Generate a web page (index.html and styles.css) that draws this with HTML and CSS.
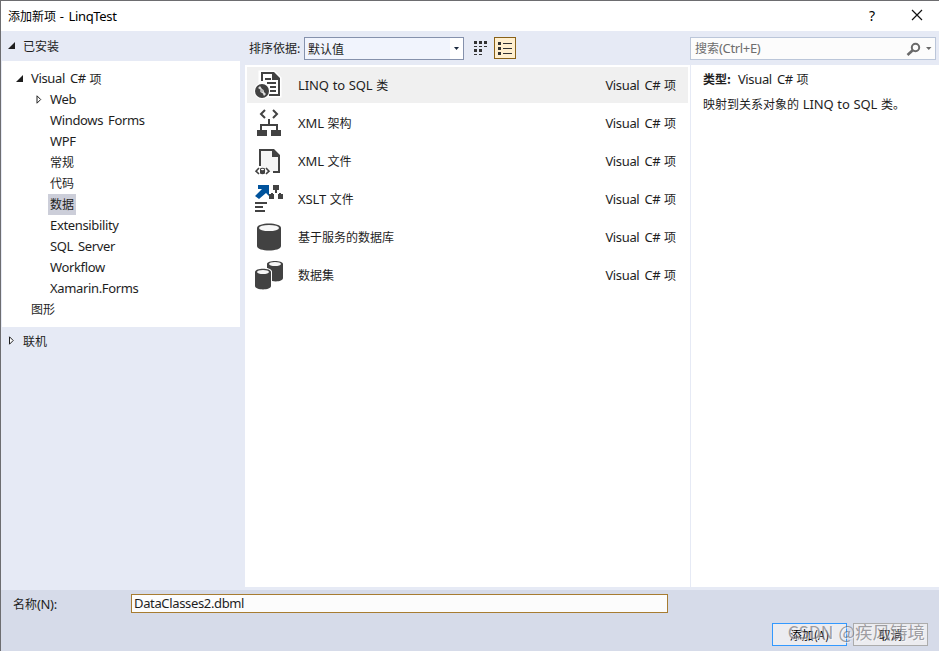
FILE: index.html
```html
<!DOCTYPE html>
<html lang="zh-CN">
<head>
<meta charset="utf-8">
<title>添加新项 - LinqTest</title>
<link rel="stylesheet" href="styles.css">
</head>
<body>
<div class="window">
  <header class="titlebar">
    <span class="title">添加新项 <b class="en">- LinqTest</b></span>
    <span class="help">?</span>
    <svg class="close" width="12" height="12" viewBox="0 0 12 12"><path d="M1 1l10 10M11 1L1 11" stroke="#111" stroke-width="1.2"/></svg>
  </header>
  <main class="content">
    <aside class="sidebar">
      <div class="group"><svg class="arrow" width="8" height="8"><path d="M7 0v7H0z" fill="#1e1e1e"/></svg>已安装</div>
      <ul class="tree">
        <li class="root"><svg class="arrow" width="8" height="8"><path d="M7 0v7H0z" fill="#1e1e1e"/></svg><b class="en">Visual C#</b> 项</li>
        <li class="branch"><svg class="arrow" width="6" height="9"><path d="M1 .8v7.4L4.7 4.5z" fill="#fff" stroke="#1e1e1e"/></svg><b class="en">Web</b></li>
        <li><b class="en">Windows Forms</b></li>
        <li><b class="en">WPF</b></li>
        <li class="cjk">常规</li>
        <li class="cjk">代码</li>
        <li><span class="selected">数据</span></li>
        <li><b class="en">Extensibility</b></li>
        <li><b class="en">SQL Server</b></li>
        <li><b class="en">Workflow</b></li>
        <li><b class="en">Xamarin.Forms</b></li>
        <li class="top cjk">图形</li>
      </ul>
      <div class="group online"><svg class="arrow" width="8" height="9"><path d="M1.5 .8v7.4L5.2 4.5z" fill="#fff" stroke="#1e1e1e"/></svg>联机</div>
    </aside>
    <section class="center">
      <div class="toolbar">
        <label>排序依据:</label>
        <div class="select"><span>默认值</span><i class="drop"><svg width="5" height="3"><path d="M0 0h5L2.5 3z" fill="#1b293e"/></svg></i></div>
        <svg class="grid-icon" width="14" height="14" fill="#333"><path d="M0 0h3v3H0zM5 0h3v3H5zM10 0h3v3h-3zM0 5h3v1H0zM5 5h3v1H5zM10 5h3v1h-3zM0 8h3v3H0zM5 8h3v3H5zM0 13h3v1H0zM5 13h3v1H5z"/></svg>
        <span class="list-button"><svg width="15" height="13" fill="#333"><path d="M0 0h3v3H0zM0 5h3v3H0zM0 10h3v3H0zM5 1h9v1H5zM5 6h9v1H5zM5 11h9v1H5z"/></svg></span>
      </div>
      <div class="list">
        <div class="item active">
          <svg class="icon" width="32" height="32" fill="#424242"><path d="M7 3h14l6 6v18H12V15H7z" fill="#fff" stroke="#fff" stroke-width="3"/><path d="M8 3h13l6 6v18H16v-2h9V11h-6V5h-9v7H8z"/><path d="M12 9h6v2h-6zM14 13h9v2h-9zM17 17h6v2h-6zM17 21h6v2h-6z"/><circle cx="9" cy="22" r="8" fill="#fff"/><circle cx="9" cy="22" r="7"/><path d="M5 19l2-2 2 3-1 1zM9 23l1-1 3 3-2 2z" fill="#ddd"/><circle cx="9" cy="22" r="1.7" fill="#fff"/><circle cx="9" cy="22" r=".7"/></svg>
          <span class="name"><b class="en wide">LINQ to SQL</b> 类</span><span><b class="en">Visual C#</b> 项</span>
        </div>
        <div class="item">
          <svg class="icon" width="32" height="32" fill="#424242"><path d="M12 3L8 7l4 4M20 3l4 4-4 4" fill="none" stroke="#424242" stroke-width="2"/><path d="M15 12h2v5h8v6h3v6H18v-6h5v-4H9v4h5v6H4v-6h3v-6h8z"/></svg>
          <span class="name"><b class="en wide">XML</b> 架构</span><span><b class="en">Visual C#</b> 项</span>
        </div>
        <div class="item">
          <svg class="icon" width="32" height="32"><path d="M8 5h12l5 5v17H8z" fill="#f5f5f5"/><path d="M6 21V4h15l6 6v18h-7v-2h5V12h-6V6H8v15z" fill="#424242"/><path d="M6 23l-3 3.2L6 29M13 23l3 3.2-3 2.8" fill="none" stroke="#424242" stroke-width="1.6"/><path d="M7 23.5q2.5-1.5 5 0v5q-2.5 1.5-5 0z" fill="#424242"/><ellipse cx="9.5" cy="24.5" rx="1.6" ry=".7" fill="#fff"/></svg>
          <span class="name"><b class="en wide">XML</b> 文件</span><span><b class="en">Visual C#</b> 项</span>
        </div>
        <div class="item">
          <svg class="icon" width="32" height="32" fill="#424242"><path d="M5 2h11v11l-3-3-7 6-4-3 7-7H5z" fill="#00539c"/><path d="M20 2h6v5h-2v3h4v1h2v5h-5v-5h1v-1h-6v1h1v5h-5v-5h2v-1h4V7h-2zM2 19h12v2H2zM2 23h8v2H2zM2 27h10v2H2z"/></svg>
          <span class="name"><b class="en wide">XSLT</b> 文件</span><span><b class="en">Visual C#</b> 项</span>
        </div>
        <div class="item">
          <svg class="icon" width="32" height="32"><path d="M4 7c0-6 24-6 24 0v18c0 6-24 6-24 0z" fill="#424242"/><ellipse cx="16" cy="7" rx="10" ry="3.1" fill="#f7f7f7"/></svg>
          <span class="name">基于服务的数据库</span><span><b class="en">Visual C#</b> 项</span>
        </div>
        <div class="item">
          <svg class="icon" width="32" height="32"><path d="M14 5c0-4 16-4 16 0v14c0 3-6 4-11 3V13l-5-4z" fill="#424242"/><ellipse cx="22" cy="5" rx="6" ry="2" fill="#f7f7f7"/><path d="M1 13c0-6 18-6 18 0v14c0 5-18 5-18 0z" fill="#fff"/><path d="M2 13c0-4.5 16-4.5 16 0v14c0 4.5-16 4.5-16 0z" fill="#424242"/><ellipse cx="10" cy="13" rx="6" ry="2" fill="#f7f7f7"/></svg>
          <span class="name">数据集</span><span><b class="en">Visual C#</b> 项</span>
        </div>
      </div>
    </section>
    <aside class="details">
      <div class="search"><span>搜索<b class="en">(Ctrl+E)</b></span><svg width="28" height="16"><circle cx="10.5" cy="6.5" r="3.7" fill="none" stroke="#6a6a6a" stroke-width="2"/><path d="M8 9l-5.5 5" stroke="#6a6a6a" stroke-width="2.6"/><path d="M21 6h5.500l-2.750 3z" fill="#6a6a6a"/></svg></div>
      <div class="description"><p><strong>类型:</strong><b class="en">Visual C#</b> 项</p><p>映射到关系对象的 <b class="en wide">LINQ to SQL</b> 类。</p></div>
    </aside>
  </main>
  <footer class="footer">
    <div class="field"><label>名称<b class="en">(N):</b></label><div class="input"><b class="en">DataClasses2.dbml</b></div></div>
    <div class="buttons"><span class="button primary">添加(A)</span><span class="button">取消</span></div>
    <span class="watermark">CSDN @疾风铸境</span>
  </footer>
</div>
</body>
</html>
```
FILE: styles.css
```css
* { box-sizing: border-box; }
body { margin: 0; color: #1e1e1e; font: 12px/21px "Noto Sans CJK SC", sans-serif; word-spacing: 1px; }
.en { font: 400 13px/1 "Noto Sans", sans-serif; letter-spacing: -.35px; word-spacing: 2px; }
.en.wide { letter-spacing: -.1px; word-spacing: .5px; }
svg { flex: none; }
.window { width: 939px; height: 651px; border: 1px solid #6d6d70; border-width: 1px 0 0 1px; display: flex; flex-direction: column; background: #e6eaf5; overflow: hidden; }
.titlebar { height: 30px; display: flex; align-items: center; background: #fff; color: #000; padding: 0 16px 2px 7px; }
.title { flex: 1; }
.help { font: 14px "Noto Sans", sans-serif; margin-right: 36px; }
.content { height: 559px; display: flex; }
.sidebar { width: 244px; padding-left: 1px; }
.group { height: 30px; display: flex; align-items: center; padding: 0 0 1px 6px; }
.group .arrow { margin-right: 7px; }
.group.online { padding-bottom: 3px; }
.tree { width: 238px; height: 266px; background: #fff; margin: 0; padding: 7px 0 0; list-style: none; }
.tree li { height: 21px; padding-left: 48px; display: flex; align-items: center; white-space: pre; }
.tree .cjk { padding-bottom: 2px; }
.tree .root { padding-left: 14px; }
.root .arrow { margin-right: 7px; }
.tree .branch { padding-left: 34px; }
.branch .arrow { margin-right: 8px; }
.tree .top { padding-left: 29px; }
.selected { background: #ccced9; padding: 0 2px; margin-left: -2px; height: 21px; line-height: 19px; }
.center { width: 445px; }
.toolbar { height: 34px; padding-left: 4px; display: flex; align-items: center; }
.toolbar label { width: 55px; white-space: nowrap; line-height: 19px; padding-bottom: 2px; }
.select { width: 160px; height: 23px; border: 1px solid #8591ac; background: #f1f4fd; padding-left: 3px; display: flex; align-items: center; justify-content: space-between; }
.drop { width: 13px; height: 21px; background: #fff; display: flex; align-items: center; justify-content: center; }
.grid-icon { margin: 0 6px 0 10px; }
.list-button { width: 22px; height: 22px; border: 1px solid #896118; background: #ffefcf; display: flex; align-items: center; justify-content: center; }
.list { height: 522px; background: #fff; padding: 2px 2px 0; display: flex; flex-direction: column; gap: 2px; }
.item { height: 36px; display: flex; align-items: center; padding: 0 12px 0 6px; white-space: pre; }
.item > span { padding-bottom: 2px; }
.item.active { background: #f0f0f0; }
.icon { margin-right: 13px; }
.name { flex: 1; }
.details { flex: 1; display: flex; flex-direction: column; }
.search { width: 246px; height: 23px; margin: 6px 0 5px; border: 1px solid #bbc6d9; background: #fcfcfc; color: #6d6d6d; padding: 0 2px 0 4px; display: flex; align-items: center; justify-content: space-between; }
.search span { padding-bottom: 2px; }
.description { height: 522px; margin-left: 1px; background: #fff; padding: 3px 12px; white-space: pre; }
.description p { margin: 0 0 4px; }
.description strong { margin-right: 7px; }
.footer { flex: 1; background: #d6dbe9; position: relative; }
.field { display: flex; padding: 4px 0 0 12px; height: 23px; align-items: center; }
.field label { width: 118px; }
.input { width: 537px; height: 19px; border: 1px solid #a77c31; background: #fcfcfc; padding-left: 2px; display: flex; align-items: center; }
.buttons { display: flex; justify-content: flex-end; gap: 6px; padding: 10px 11px 0 0; }
.button { width: 75px; height: 23px; border: 1px solid #acacac; background: #ececf0; color: #000; text-align: center; }
.button.primary { border-color: #3399ff; }
.watermark { position: absolute; right: 14px; top: 30px; font: 17.5px/24px "Noto Sans CJK SC", sans-serif; color: rgba(110,110,115,.65); text-shadow: 1px 1px rgba(255,255,255,.5); white-space: nowrap; }
```
